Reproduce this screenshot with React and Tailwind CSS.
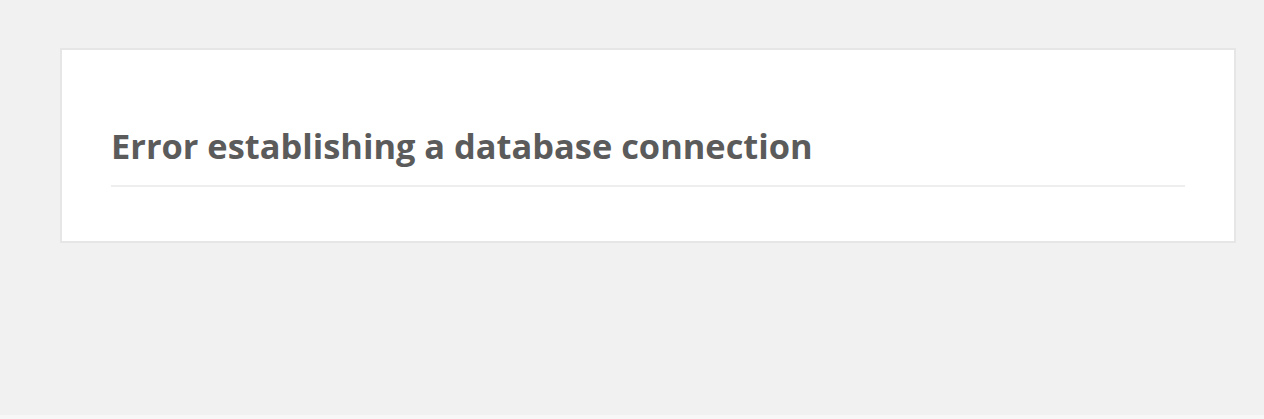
export default function App() {
  return (
    <div className="min-h-[419px] flex flex-col bg-[#f7f7f7]">
      <div className="h-[415px] bg-[#f1f1f1] pt-[48px] pl-[60px] pr-[28px]">
        <div className="bg-white border-2 border-[#e6e6e6] px-[49px] pt-[76px] pb-[54px]">
          <h1
            className="text-[#5b5b5b] text-[34.4px] font-bold leading-[40px] pb-[19px] border-b-2 border-[#eeeeee]"
            style={{ fontFamily: '"Open Sans", "Noto Sans", sans-serif' }}
          >
            Error establishing a database connection
          </h1>
        </div>
      </div>
    </div>
  );
}
